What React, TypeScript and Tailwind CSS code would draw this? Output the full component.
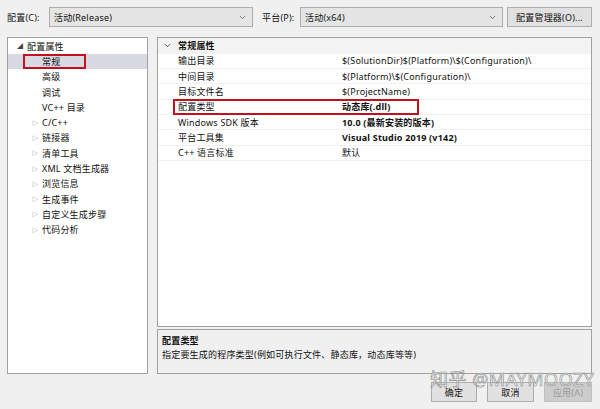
import { ChevronDown } from "lucide-react";

const treeItems = [
    { label: "常规", expandable: false, selected: true },
    { label: "高级", expandable: false },
    { label: "调试", expandable: false },
    { label: "VC++ 目录", expandable: false },
    { label: "C/C++", expandable: true },
    { label: "链接器", expandable: true },
    { label: "清单工具", expandable: true },
    { label: "XML 文档生成器", expandable: true },
    { label: "浏览信息", expandable: true },
    { label: "生成事件", expandable: true },
    { label: "自定义生成步骤", expandable: true },
    { label: "代码分析", expandable: true },
];

const props = [
    { name: "输出目录", value: "$(SolutionDir)$(Platform)\\$(Configuration)\\" },
    { name: "中间目录", value: "$(Platform)\\$(Configuration)\\" },
    { name: "目标文件名", value: "$(ProjectName)" },
    { name: "配置类型", value: "动态库(.dll)", bold: true, marked: true },
    { name: "Windows SDK 版本", value: "10.0 (最新安装的版本)", bold: true },
    { name: "平台工具集", value: "Visual Studio 2019 (v142)", bold: true },
    { name: "C++ 语言标准", value: "默认" },
];

function Combo({ text, width }: { text: string; width: string }) {
    return (
        <div className={`${width} h-[20px] flex items-center justify-between pl-[4px] pr-[5px] bg-[#e5e5e5] border border-[#adadad]`}>
            <span>{text}</span>
            <ChevronDown className="w-[9px] h-[9px] text-[#555]" strokeWidth={2} />
        </div>
    );
}

export default function App() {
    return (
        <div className="relative w-[600px] h-[409px] bg-[#f0f0f0] text-[9px] leading-none tracking-[0.2px] text-[#111] font-['Noto_Sans','Noto_Sans_CJK_SC',sans-serif] overflow-hidden">
            {/* Top bar */}
            <div className="flex items-center h-[20px] mt-[7px] pl-[7px]">
                <span className="w-[42px]">配置(C):</span>
                <Combo text="活动(Release)" width="w-[204px]" />
                <span className="ml-[9px] w-[38px]">平台(P):</span>
                <Combo text="活动(x64)" width="w-[203px]" />
                <button className="ml-[4px] w-[85px] h-[20px] bg-[#e1e1e1] border border-[#adadad]">
                    配置管理器(O)...
                </button>
            </div>

            {/* Main area */}
            <div className="flex mt-[10px] pl-[7px] h-[337px]">
                {/* Tree */}
                <div className="w-[141px] h-full bg-white border border-[#a0a0a0] pt-[0.5px]">
                    <div className="flex items-center h-[15.3px]">
                        <span className="ml-[9px] w-[10px] text-[6px] text-[#444]">◢</span>
                        <span>配置属性</span>
                    </div>
                    {treeItems.map((item) => (
                        <div
                            key={item.label}
                            className={`relative flex items-center h-[15.3px] ${item.selected ? "bg-[#d9d9e3]" : ""}`}
                        >
                            <span className="ml-[24px] w-[10px] text-[6px] text-[#555]">
                                {item.expandable ? "▷" : ""}
                            </span>
                            <span>{item.label}</span>
                            {item.selected && (
                                <div className="absolute left-[15px] top-0 w-[63px] h-full border-2 border-[#c40f1e]" />
                            )}
                        </div>
                    ))}
                </div>

                {/* Right column */}
                <div className="ml-[9px] w-[435px] h-full flex flex-col gap-[2px]">
                    <div className="flex-1 bg-white border border-[#a0a0a0]">
                        <div className="flex items-center h-[15.8px] bg-[#f3f3f3]">
                            <ChevronDown className="ml-[5px] w-[9px] h-[9px] text-[#333]" strokeWidth={2} />
                            <span className="ml-[6px] font-bold">常规属性</span>
                        </div>
                        {props.map((p) => (
                            <div key={p.name} className="relative flex items-center h-[15.3px] border-b border-[#f0f0f0]">
                                <span className="ml-[20px] w-[164px]">{p.name}</span>
                                <span className={p.bold ? "font-bold" : ""}>{p.value}</span>
                                {p.marked && (
                                    <div className="absolute left-[15px] -top-[1px] w-[246px] h-[16px] border-2 border-[#c40f1e]" />
                                )}
                            </div>
                        ))}
                    </div>
                    <div className="h-[45px] bg-[#f0f0f0] border border-[#a0a0a0] px-[4px] pt-[6px] flex flex-col gap-[5px]">
                        <span className="font-bold">配置类型</span>
                        <span>指定要生成的程序类型(例如可执行文件、静态库，动态库等等)</span>
                    </div>
                </div>
            </div>

            {/* Buttons */}
            <div className="flex justify-end gap-[10px] mt-[8px] pr-[8px]">
                <button className="w-[46px] h-[20px] bg-[#e1e1e1] border border-[#adadad]">确定</button>
                <button className="w-[47px] h-[20px] bg-[#e1e1e1] border border-[#adadad]">取消</button>
                <button className="w-[48px] h-[20px] bg-[#cccccc] border border-[#bfbfbf] text-[#9a9a9a]">应用(A)</button>
            </div>

            {/* Watermark */}
            <div className="absolute left-[430px] top-[370px] text-[18px] leading-none text-white/60 [-webkit-text-stroke:0.6px_#8a8a8a] tracking-[0.5px]">
                知乎 @MAYMOOZY
            </div>
        </div>
    );
}
